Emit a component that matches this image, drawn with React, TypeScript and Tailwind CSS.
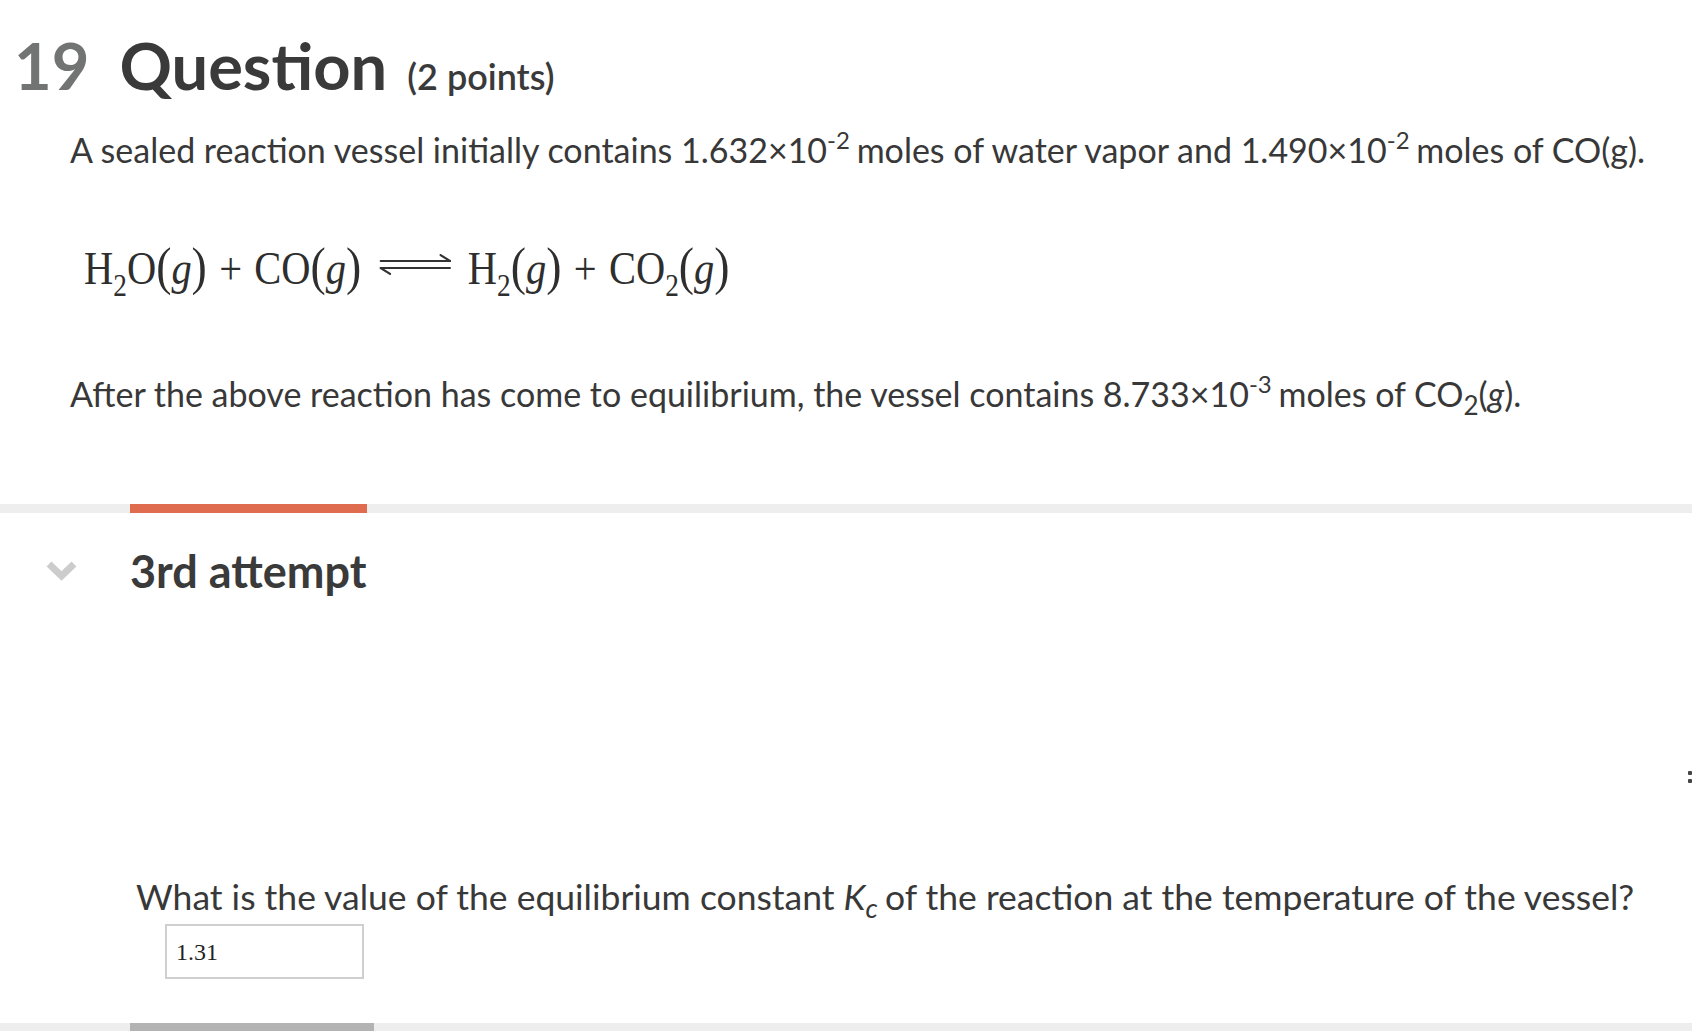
import React from "react";

function EqArrow() {
  return (
    <svg width="83" height="22" viewBox="0 0 83 22" className="inline-block ml-[20px] mr-[18px]" style={{ verticalAlign: "8px" }}>
      <g stroke="#333" strokeWidth="2" fill="none" strokeLinecap="round">
        <line x1="2" y1="7" x2="81" y2="7" />
        <line x1="81" y1="7" x2="70" y2="1" />
        <line x1="2" y1="14" x2="81" y2="14" />
        <line x1="2" y1="14" x2="13" y2="20" />
      </g>
    </svg>
  );
}

function Sup({ children }: { children: React.ReactNode }) {
  return <span className="relative top-[-14px] text-[24px] leading-[0] mr-[-2px]">{children}</span>;
}

function P({ children }: { children: React.ReactNode }) {
  return <span className="text-[52px] leading-[0]">{children}</span>;
}

function Sub({ children }: { children: React.ReactNode }) {
  return <span className="text-[31px] relative top-[12px] leading-[0]">{children}</span>;
}

function Plus() {
  return <span className="mx-[14px]">+</span>;
}

export default function App() {
  return (
    <div className="relative w-[1692px] h-[1031px] overflow-hidden bg-white text-[#383838]" style={{ fontFamily: "Lato, 'Open Sans', sans-serif" }}>
      {/* Title */}
      <div className="pt-[33px] pl-[14px] flex items-baseline whitespace-nowrap">
        <span className="text-[65px] leading-[64px] font-bold text-[#717473]">19</span>
        <span className="ml-[30px] text-[65px] leading-[64px] font-bold text-[#3a3a3a]">Question</span>
        <span className="ml-[20px] text-[36px] leading-[64px] font-semibold text-[#3a3a3a]">(2 points)</span>
      </div>

      {/* Line 1 */}
      <p className="mt-[22px] pl-[70px] text-[34px] leading-[40px] whitespace-nowrap">
        A sealed reaction vessel initially contains 1.632×10<Sup>-2</Sup> moles of water vapor and 1.490×10<Sup>-2</Sup> moles of CO(g).
      </p>

      {/* Equation */}
      <div className="mt-[74px] pl-[84px] h-[50px] whitespace-nowrap">
        <div className="inline-block origin-left scale-x-[0.88] text-[46px] leading-[50px] text-[#2e2e2e]" style={{ fontFamily: "'Liberation Serif', 'Times New Roman', serif" }}>
          H<Sub>2</Sub>O<P>(</P><i>g</i><P>)</P>
          <Plus />
          CO<P>(</P><i>g</i><P>)</P>
          <EqArrow />
          H<Sub>2</Sub><P>(</P><i>g</i><P>)</P>
          <Plus />
          CO<Sub>2</Sub><P>(</P><i>g</i><P>)</P>
        </div>
      </div>

      {/* Line 2 */}
      <p className="mt-[80px] pl-[70px] text-[34px] leading-[40px] whitespace-nowrap">
        After the above reaction has come to equilibrium, the vessel contains 8.733×10<Sup>-3</Sup> moles of CO
        <span className="relative top-[8px] text-[26px] leading-[0]">2</span>(<i>g</i>).
      </p>

      {/* Progress bar */}
      <div className="mt-[90px] h-[9px] bg-[#eeeeee] flex">
        <div className="ml-[130px] w-[237px] h-full bg-[#df6c4e]" />
      </div>

      {/* Attempt header */}
      <div className="mt-[36px] flex items-center">
        <div className="w-[130px] pl-[45px] flex items-center">
          <svg width="33" height="22" viewBox="0 0 33 22">
            <polyline points="4,4 16.5,16 29,4" fill="none" stroke="#cccccc" strokeWidth="7" strokeLinecap="butt" strokeLinejoin="miter" />
          </svg>
        </div>
        <h2 className="text-[45px] leading-[44px] font-bold text-[#3a3a3a] whitespace-nowrap">3rd attempt</h2>
      </div>

      {/* Question */}
      <p className="mt-[284px] pl-[136px] text-[35.5px] leading-[40px] whitespace-nowrap">
        What is the value of the equilibrium constant <i>K</i>
        <i className="relative top-[8px] text-[27px] leading-[0] mr-[-2px]">c</i> of the reaction at the temperature of the vessel?
      </p>

      {/* Input */}
      <div className="mt-[7px] ml-[165px] w-[199px] h-[55px] border-2 border-[#cfcfcf] flex items-center pl-[9px] text-[24px] text-[#222]" style={{ fontFamily: "'Liberation Serif', 'Times New Roman', serif" }}>
        1.31
      </div>

      {/* Bottom bar */}
      <div className="mt-[44px] h-[8px] bg-[#eeeeee] flex">
        <div className="ml-[130px] w-[244px] h-full bg-[#b3b3b3]" />
      </div>

      {/* Edge marker */}
      <div className="absolute right-0 top-[771px] flex flex-col gap-[4px]">
        <div className="w-[4px] h-[4px] rounded-[1px] bg-[#444]" />
        <div className="w-[4px] h-[4px] rounded-[1px] bg-[#444]" />
      </div>
    </div>
  );
}
